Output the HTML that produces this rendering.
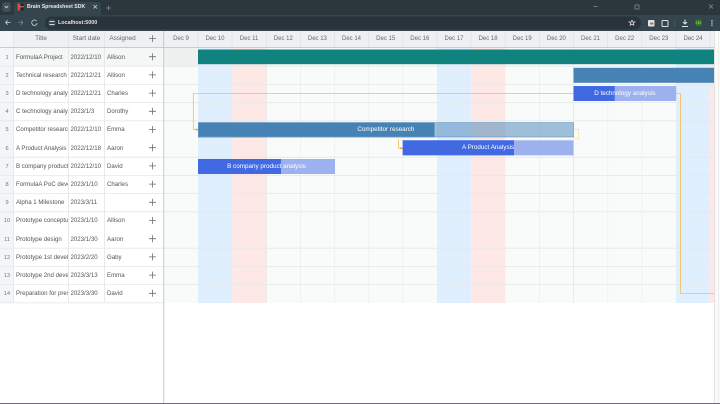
<!DOCTYPE html>
<html><head><meta charset="utf-8">
<style>
html,body{margin:0;padding:0;width:720px;height:404px;overflow:hidden;background:#fff;font-family:"Liberation Sans",sans-serif}
#wrap{position:relative;width:720px;height:404px;overflow:hidden;filter:blur(.3px)}
#rows{position:absolute;left:0;top:.7px;width:720px;height:404px}
svg{position:absolute;left:0;top:0}
.t{position:absolute;white-space:nowrap;overflow:hidden;font-size:6.1px;color:#555;line-height:10px;height:10px}
.h{color:#666;font-size:6.4px;text-align:center;top:33.8px}
.d{font-size:6px}
.n{color:#777;font-size:5.600px;text-align:center;left:0;width:14px}
.c1{left:16px;width:52px}
.c2{left:70.5px;width:34px}
.c3{left:107px;width:40px}
.b{position:absolute;color:#fff;font-size:6.3px;line-height:15px;height:15px;text-align:center;white-space:nowrap}
</style></head><body><div id="wrap">
<svg width="720" height="404" viewBox="0 0 720 404">
<!-- browser chrome -->
<rect x="0" y="0" width="720" height="15" fill="#2b373d"/>
<rect x="0" y="15" width="720" height="16" fill="#35454d"/>
<rect x="2" y="2" width="9" height="10" rx="3" fill="#3d4e56"/>
<path d="M4.8 6l1.700 1.800L8.200 6" fill="none" stroke="#d5dcdf" stroke-width=".9"/>
<path d="M12 15q2 0 2-2V5q0-3 3-3h81q3 0 3 3v8q0 2 3 2z" fill="#35454d"/>
<rect x="17.500" y="3.500" width="2.500" height="7" fill="#e34234"/><rect x="21" y="3.500" width="2.500" height="7" fill="#222"/><rect x="17.500" y="6" width="6" height="1.400" fill="#d9534f"/>
<path d="M93.500 5l3.500 3.500M97 5l-3.500 3.500" stroke="#c8d0d3" stroke-width=".8"/>
<path d="M106 8h5M108.500 5.500v5" stroke="#7f8d93" stroke-width=".8"/>
<path d="M676.500 6.500h4" stroke="#87949a" stroke-width=".7" transform="translate(-83 0)"/>
<rect x="635" y="5" width="4" height="4" fill="none" stroke="#87949a" stroke-width=".7"/>
<path d="M692 4.500l4 4M696 4.500l-4 4" stroke="#87949a" stroke-width=".7" transform="translate(17 0)"/>
<path d="M5.500 22.500h5M5.500 22.500l2.200-2.200M5.500 22.500l2.200 2.200" fill="none" stroke="#cfd6d9" stroke-width=".8"/>
<path d="M23 22.500h-5M23 22.500l-2.200-2.200M23 22.500l-2.200 2.200" fill="none" stroke="#75848a" stroke-width=".8"/>
<path d="M36.500 21a2.700 2.700 0 1 0 .6 2" fill="none" stroke="#cfd6d9" stroke-width=".8"/>
<rect x="45" y="16.500" width="596" height="13" rx="6.500" fill="#283439"/>
<rect x="48" y="19" width="8" height="8" rx="4" fill="#3c4b52"/>
<path d="M49.500 21.500h5M49.500 24.500h5" stroke="#d5dcdf" stroke-width=".9"/>
<path d="M632.500 19.800l.8 1.900 2-.1-1.500 1.300.5 2-1.800-1.100-1.800 1.100.5-2-1.500-1.300 2 .1z" fill="none" stroke="#cfd6d9" stroke-width=".8" transform="translate(-.5 .3)"/>
<rect x="648" y="20" width="6.500" height="6.500" rx="1" fill="#dfe3e5"/><rect x="650" y="22.500" width="3.500" height="2" fill="#b56b6b"/>
<rect x="662" y="20.500" width="6" height="6" rx="1" fill="none" stroke="#dfe3e5" stroke-width="1"/>
<path d="M674.500 20v7" stroke="#4d5c63" stroke-width=".6"/>
<path d="M685 19.500v4M683 22l2 2 2-2M682 26.500h6" fill="none" stroke="#dfe3e5" stroke-width="1"/>
<circle cx="698.500" cy="22.800" r="3.600" fill="#2e7d18"/>
<rect x="711.300" y="20" width="1.300" height="1.300" fill="#cfd6d9"/><rect x="711.300" y="22.300" width="1.300" height="1.300" fill="#cfd6d9"/><rect x="711.300" y="24.600" width="1.300" height="1.300" fill="#cfd6d9"/>

<!-- left table backgrounds -->
<rect x="0" y="31" width="714" height="17" fill="#eef0f3"/>
<rect x="0" y="31" width="13.500" height="272" fill="#f3f5f8"/>
<rect x="13.500" y="48" width="150" height="18" fill="#f5f6f6"/>
<!-- timeline background -->
<rect x="164" y="48" width="550" height="255" fill="#f9fbfa"/>
<rect x="164" y="48" width="34" height="18" fill="#eff1f0"/>
<rect x="198" y="48" width="34.200" height="255" fill="#e0effe"/>
<rect x="232.200" y="48" width="34.200" height="255" fill="#fde8e6"/>
<rect x="437" y="48" width="34.200" height="255" fill="#e0effe"/>
<rect x="471.200" y="48" width="34.200" height="255" fill="#fde8e6"/>
<rect x="676" y="48" width="34" height="255" fill="#e0effe"/>
<rect x="710" y="48" width="4" height="255" fill="#fde8e6"/>
<!-- vertical grid -->
<g stroke="#eceeee" stroke-width=".7">
<path d="M300.500 48V303M334.600 48V303M368.800 48V303M402.900 48V303M539.500 48V303M607.800 48V303M641.900 48V303"/>
</g>
<g stroke="#e6e8e8" stroke-width=".8">
<path d="M266.400 48V303M573.600 48V303"/>
</g>
<!-- header separators -->
<g stroke="#dfe1e4" stroke-width=".7">
<path d="M13.500 31V303M68.500 31V303M104.500 31V303"/>
<path d="M198 31V48M232.100 31V48M266.300 31V48M300.400 31V48M334.500 31V48M368.700 31V48M402.800 31V48M437 31V48M471.100 31V48M505.200 31V48M539.400 31V48M573.500 31V48M607.700 31V48M641.800 31V48M676 31V48M710 31V48"/>
</g>
<!-- row lines -->
<g stroke="#e6e8e8" stroke-width=".8">
<path d="M0 66.200H714M0 84.400H714M0 102.600H714M0 120.800H714M0 157.200H714M0 175.400H714M0 193.600H714M0 211.800H714M0 248.200H714M0 266.400H714M0 284.600H714M0 302.800H164"/>
</g>
<path d="M0 47.500H714" stroke="#c9cbce" stroke-width="1"/>
<path d="M163.700 31V404" stroke="#c8c9ca" stroke-width="1"/>
<!-- plus icons -->
<g stroke="#6e6e6e" stroke-width=".8" transform="translate(0 -.4)">
<path d="M149 39h7M152.500 35.500v7"/>
<path d="M149 57.100h7M152.500 53.600v7"/>
<path d="M149 75.300h7M152.500 71.800v7"/>
<path d="M149 93.500h7M152.500 90v7"/>
<path d="M149 111.700h7M152.500 108.200v7"/>
<path d="M149 129.900h7M152.500 126.400v7"/>
<path d="M149 148.100h7M152.500 144.600v7"/>
<path d="M149 166.300h7M152.500 162.800v7"/>
<path d="M149 184.500h7M152.500 181v7"/>
<path d="M149 202.700h7M152.500 199.200v7"/>
<path d="M149 220.900h7M152.500 217.400v7"/>
<path d="M149 239.100h7M152.500 235.600v7"/>
<path d="M149 257.300h7M152.500 253.800v7"/>
<path d="M149 275.500h7M152.500 272v7"/>
<path d="M149 293.700h7M152.500 290.200v7"/>
</g>
<!-- dependency lines -->
<g fill="none" stroke="#f5bd55" stroke-width=".8">
<path d="M573.500 93.400H193.300V129.600H198"/>
<path d="M676 93.400H680.400V293.400H714"/>
<path d="M398.400 139V148.200H402.700"/>
</g>
<path d="M573.500 129.300H578.700V138.900H573.500" fill="none" stroke="#f9dfa9" stroke-width=".8"/>
<rect x="195.500" y="128.800" width="2.500" height="1.700" fill="#f0a830"/>
<rect x="400.200" y="147.400" width="2.500" height="1.700" fill="#f0a830"/>
<!-- bars -->
<rect x="198" y="49.500" width="516" height="14.700" fill="#10837f"/>
<rect x="573.500" y="67.800" width="140.500" height="15" fill="#4682b4"/>
<rect x="573.500" y="86" width="102.700" height="15" fill="#9db1ee"/>
<rect x="573.500" y="86" width="41.200" height="15" fill="#4169e1"/>
<rect x="198" y="122.300" width="375.700" height="15" fill="#4682b4" fill-opacity=".5"/>
<rect x="198" y="122.300" width="236.500" height="15" fill="#4682b4"/>
<rect x="198.400" y="122.700" width="375" height="14.200" fill="none" stroke="#6a9bc6" stroke-width=".6"/>
<rect x="402.700" y="140.300" width="170.800" height="15" fill="#9db1ee"/>
<rect x="402.700" y="140.300" width="111.300" height="15" fill="#4169e1"/>
<rect x="198" y="159" width="137" height="15" fill="#9db1ee"/>
<rect x="198" y="159" width="83" height="15" fill="#4169e1"/>
<!-- right scrollbar -->
<rect x="714" y="31" width="6" height="373" fill="#fafafa"/>
<path d="M714.500 31V403" stroke="#e2e2e2" stroke-width="1"/>
<path d="M718.500 31V403" stroke="#eeeeee" stroke-width="1"/>
<!-- bottom line -->
<rect x="0" y="403.200" width="720" height=".8" fill="#5a4268"/>
</svg>

<div class="t" style="left:27px;top:1.500px;width:60px;color:#e4e9eb;font-size:5.200px;font-weight:bold;">Brain Spreadsheet SDK</div>
<div class="t" style="left:58px;top:17.500px;width:60px;color:#dde3e6;font-size:5.400px;font-weight:bold">Localhost:5000</div>
<div class="t" style="left:694.500px;top:20.500px;width:8px;color:#cfe8c4;font-size:3.500px;line-height:5px;height:5px;text-align:center">HJ</div>

<div class="t h" style="left:13.500px;width:55px">Title</div>
<div class="t h" style="left:68.500px;width:36px">Start date</div>
<div class="t h" style="left:104.500px;width:36px">Assigned</div>

<div class="t h d" style="left:164px;width:34px">Dec 9</div>
<div class="t h d" style="left:198px;width:34px">Dec 10</div>
<div class="t h d" style="left:232.100px;width:34px">Dec 11</div>
<div class="t h d" style="left:266.300px;width:34px">Dec 12</div>
<div class="t h d" style="left:300.400px;width:34px">Dec 13</div>
<div class="t h d" style="left:334.500px;width:34px">Dec 14</div>
<div class="t h d" style="left:368.700px;width:34px">Dec 15</div>
<div class="t h d" style="left:402.800px;width:34px">Dec 16</div>
<div class="t h d" style="left:437px;width:34px">Dec 17</div>
<div class="t h d" style="left:471.100px;width:34px">Dec 18</div>
<div class="t h d" style="left:505.200px;width:34px">Dec 19</div>
<div class="t h d" style="left:539.400px;width:34px">Dec 20</div>
<div class="t h d" style="left:573.500px;width:34px">Dec 21</div>
<div class="t h d" style="left:607.700px;width:34px">Dec 22</div>
<div class="t h d" style="left:641.800px;width:34px">Dec 23</div>
<div class="t h d" style="left:676px;width:34px">Dec 24</div>

<div id="rows">
<div class="t n" style="top:52px">1</div><div class="t c1" style="top:52px">FormulaA Project</div><div class="t c2" style="top:52px">2022/12/10</div><div class="t c3" style="top:52px">Allison</div>
<div class="t n" style="top:70.200px">2</div><div class="t c1" style="top:70.200px">Technical research</div><div class="t c2" style="top:70.200px">2022/12/21</div><div class="t c3" style="top:70.200px">Allison</div>
<div class="t n" style="top:88.400px">3</div><div class="t c1" style="top:88.400px">D technology analysis</div><div class="t c2" style="top:88.400px">2022/12/21</div><div class="t c3" style="top:88.400px">Charles</div>
<div class="t n" style="top:106.600px">4</div><div class="t c1" style="top:106.600px">C technology analysis</div><div class="t c2" style="top:106.600px">2023/1/3</div><div class="t c3" style="top:106.600px">Dorothy</div>
<div class="t n" style="top:124.800px">5</div><div class="t c1" style="top:124.800px">Competitor research</div><div class="t c2" style="top:124.800px">2022/12/10</div><div class="t c3" style="top:124.800px">Emma</div>
<div class="t n" style="top:143px">6</div><div class="t c1" style="top:143px">A Product Analysis</div><div class="t c2" style="top:143px">2022/12/18</div><div class="t c3" style="top:143px">Aaron</div>
<div class="t n" style="top:161.200px">7</div><div class="t c1" style="top:161.200px">B company product analysis</div><div class="t c2" style="top:161.200px">2022/12/10</div><div class="t c3" style="top:161.200px">David</div>
<div class="t n" style="top:179.400px">8</div><div class="t c1" style="top:179.400px">FormulaA PoC development</div><div class="t c2" style="top:179.400px">2023/1/10</div><div class="t c3" style="top:179.400px">Charles</div>
<div class="t n" style="top:197.600px">9</div><div class="t c1" style="top:197.600px">Alpha 1 Milestone</div><div class="t c2" style="top:197.600px">2023/3/11</div>
<div class="t n" style="top:215.800px">10</div><div class="t c1" style="top:215.800px">Prototype conceptual design</div><div class="t c2" style="top:215.800px">2023/1/10</div><div class="t c3" style="top:215.800px">Allison</div>
<div class="t n" style="top:234px">11</div><div class="t c1" style="top:234px">Prototype design</div><div class="t c2" style="top:234px">2023/1/30</div><div class="t c3" style="top:234px">Aaron</div>
<div class="t n" style="top:252.200px">12</div><div class="t c1" style="top:252.200px">Prototype 1st development</div><div class="t c2" style="top:252.200px">2023/2/20</div><div class="t c3" style="top:252.200px">Gaby</div>
<div class="t n" style="top:270.400px">13</div><div class="t c1" style="top:270.400px">Prototype 2nd development</div><div class="t c2" style="top:270.400px">2023/3/13</div><div class="t c3" style="top:270.400px">Emma</div>
<div class="t n" style="top:288.600px">14</div><div class="t c1" style="top:288.600px">Preparation for presentation</div><div class="t c2" style="top:288.600px">2023/3/30</div><div class="t c3" style="top:288.600px">David</div>
</div>

<div class="b" style="left:573.500px;top:86px;width:102.700px">D technology analysis</div>
<div class="b" style="left:198px;top:122.300px;width:375.700px">Competitor research</div>
<div class="b" style="left:402.700px;top:140.300px;width:170.800px">A Product Analysis</div>
<div class="b" style="left:198px;top:159px;width:137px">B company product analysis</div>
</div></body></html>
